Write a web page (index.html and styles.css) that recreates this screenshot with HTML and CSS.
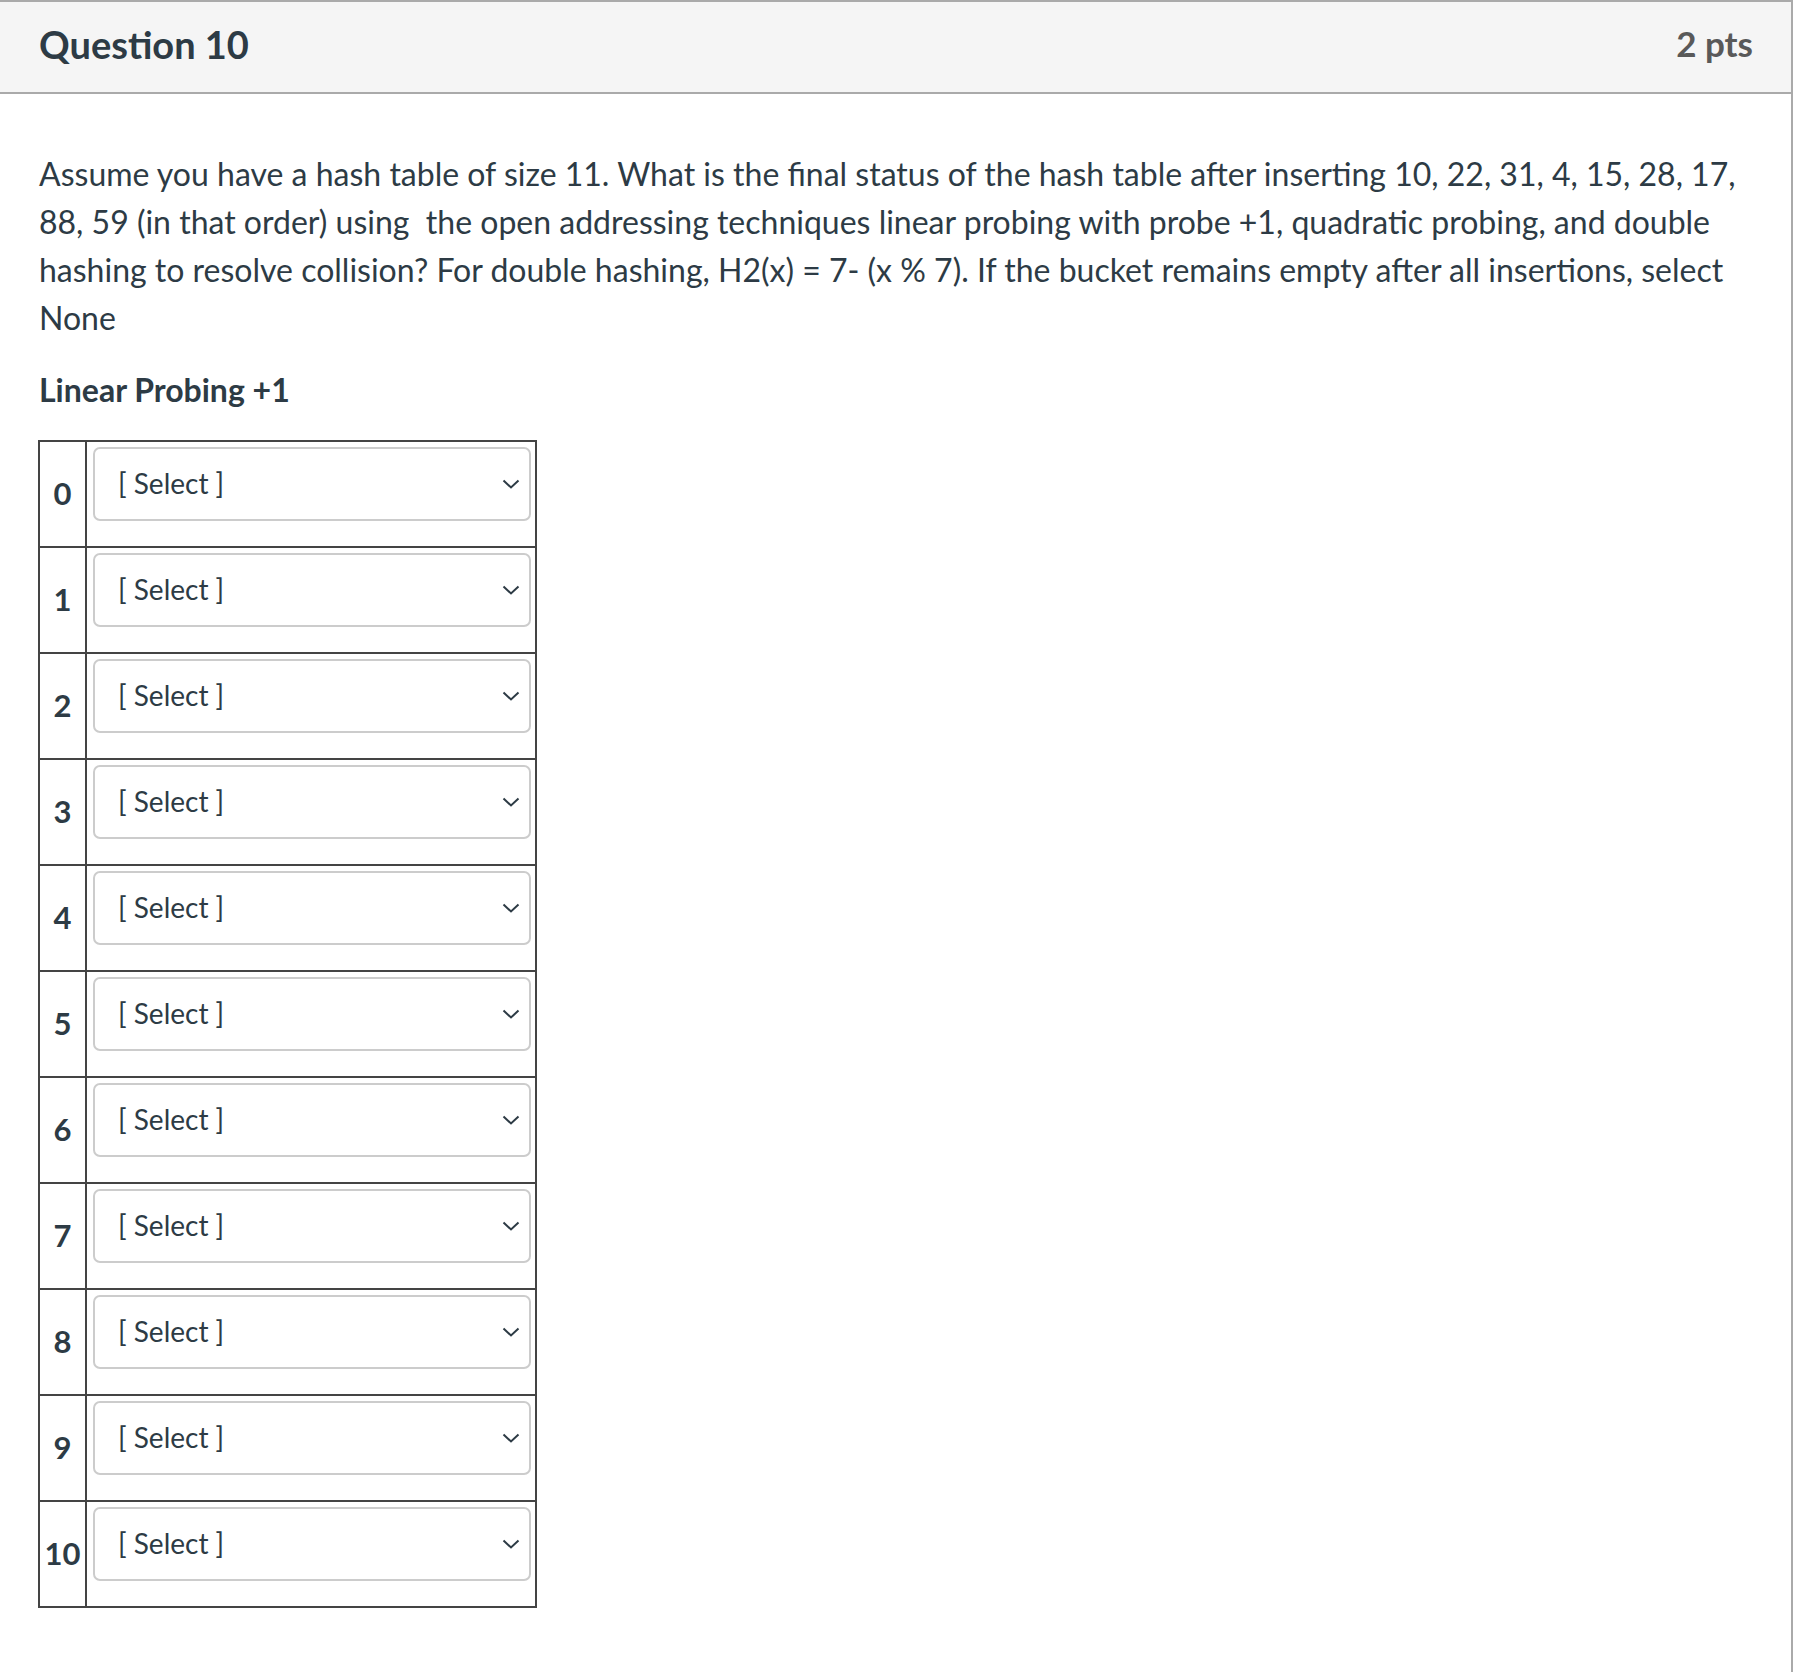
FILE: index.html
```html
<!DOCTYPE html>
<html lang="en">
<head>
<meta charset="utf-8">
<title>Question 10</title>
<link rel="stylesheet" href="styles.css">
</head>
<body>
<div class="question">
  <div class="q-header">
    <h2 class="q-title">Question 10</h2>
    <div class="q-points">2 pts</div>
  </div>
  <div class="q-body">
    <p class="q-text">Assume you have a hash table of size 11. What is the final status of the hash table after inserting 10, 22, 31, 4, 15, 28, 17, 88, 59 (in that order) using &nbsp;the open addressing techniques linear probing with probe +1, quadratic probing, and double hashing to resolve collision? For double hashing, H2(x) = 7- (x % 7). If the bucket remains empty after all insertions, select None</p>
    <p class="q-sub"><strong>Linear Probing +1</strong></p>
    <table class="hash">
      <tbody>
        <tr><th>0</th><td><div class="select"><span>[ Select ]</span><svg viewBox="0 0 18 10" width="18" height="10"><path d="M1.5 1.5 L9 8.5 L16.5 1.5" fill="none" stroke="#2d3b45" stroke-width="2"/></svg></div></td></tr>
        <tr><th>1</th><td><div class="select"><span>[ Select ]</span><svg viewBox="0 0 18 10" width="18" height="10"><path d="M1.5 1.5 L9 8.5 L16.5 1.5" fill="none" stroke="#2d3b45" stroke-width="2"/></svg></div></td></tr>
        <tr><th>2</th><td><div class="select"><span>[ Select ]</span><svg viewBox="0 0 18 10" width="18" height="10"><path d="M1.5 1.5 L9 8.5 L16.5 1.5" fill="none" stroke="#2d3b45" stroke-width="2"/></svg></div></td></tr>
        <tr><th>3</th><td><div class="select"><span>[ Select ]</span><svg viewBox="0 0 18 10" width="18" height="10"><path d="M1.5 1.5 L9 8.5 L16.5 1.5" fill="none" stroke="#2d3b45" stroke-width="2"/></svg></div></td></tr>
        <tr><th>4</th><td><div class="select"><span>[ Select ]</span><svg viewBox="0 0 18 10" width="18" height="10"><path d="M1.5 1.5 L9 8.5 L16.5 1.5" fill="none" stroke="#2d3b45" stroke-width="2"/></svg></div></td></tr>
        <tr><th>5</th><td><div class="select"><span>[ Select ]</span><svg viewBox="0 0 18 10" width="18" height="10"><path d="M1.5 1.5 L9 8.5 L16.5 1.5" fill="none" stroke="#2d3b45" stroke-width="2"/></svg></div></td></tr>
        <tr><th>6</th><td><div class="select"><span>[ Select ]</span><svg viewBox="0 0 18 10" width="18" height="10"><path d="M1.5 1.5 L9 8.5 L16.5 1.5" fill="none" stroke="#2d3b45" stroke-width="2"/></svg></div></td></tr>
        <tr><th>7</th><td><div class="select"><span>[ Select ]</span><svg viewBox="0 0 18 10" width="18" height="10"><path d="M1.5 1.5 L9 8.5 L16.5 1.5" fill="none" stroke="#2d3b45" stroke-width="2"/></svg></div></td></tr>
        <tr><th>8</th><td><div class="select"><span>[ Select ]</span><svg viewBox="0 0 18 10" width="18" height="10"><path d="M1.5 1.5 L9 8.5 L16.5 1.5" fill="none" stroke="#2d3b45" stroke-width="2"/></svg></div></td></tr>
        <tr><th>9</th><td><div class="select"><span>[ Select ]</span><svg viewBox="0 0 18 10" width="18" height="10"><path d="M1.5 1.5 L9 8.5 L16.5 1.5" fill="none" stroke="#2d3b45" stroke-width="2"/></svg></div></td></tr>
        <tr><th>10</th><td><div class="select"><span>[ Select ]</span><svg viewBox="0 0 18 10" width="18" height="10"><path d="M1.5 1.5 L9 8.5 L16.5 1.5" fill="none" stroke="#2d3b45" stroke-width="2"/></svg></div></td></tr>
      </tbody>
    </table>
  </div>
</div>
</body>
</html>
```

FILE: styles.css
```css
html, body {
  margin: 0;
  padding: 0;
  background: #fff;
}

body {
  font-family: Lato, "Open Sans", "Liberation Sans", sans-serif;
  color: #2d3b45;
}

.question {
  width: 1793px;
  min-height: 1672px;
  box-sizing: border-box;
  border-top: 2px solid #aaaaaa;
  border-right: 2px solid #aaaaaa;
}

.q-header {
  display: flex;
  justify-content: space-between;
  align-items: center;
  box-sizing: border-box;
  height: 92px;
  padding: 0 38px 7px 39px;
  background: #f5f5f5;
  border-bottom: 2px solid #aaaaaa;
}

.q-title {
  margin: 0;
  font-size: 38px;
  font-weight: 700;
  color: #2d3b45;
  line-height: 1;
}

.q-points {
  font-size: 35px;
  font-weight: 700;
  color: #595959;
  line-height: 1;
}

.q-body {
  padding: 56px 40px 0 39px;
}

.q-text {
  margin: 0 0 24px 0;
  font-size: 32px;
  line-height: 48px;
}

.q-sub {
  margin: 0 0 26px 0;
  font-size: 32px;
  line-height: 48px;
}

.hash {
  border-collapse: collapse;
  margin-left: -1px;
  border: 2px solid #444;
}

.hash th,
.hash td {
  border: 2px solid #444;
}

.hash th {
  width: 45px;
  padding: 0 0 3px 0;
  text-align: center;
  vertical-align: middle;
  font-size: 31px;
  font-weight: 700;
  color: #2d3b45;
}

.hash td {
  padding: 5px 4px 25px 6px;
  vertical-align: top;
}

.select {
  display: flex;
  align-items: center;
  justify-content: space-between;
  box-sizing: border-box;
  width: 438px;
  height: 74px;
  padding: 0 9px 0 23px;
  border: 2px solid #cccccc;
  border-radius: 7px;
  background: #fff;
  font-size: 28px;
  color: #2d3b45;
}

.select span {
  line-height: 1.2;
}

.select svg {
  display: block;
}
```
